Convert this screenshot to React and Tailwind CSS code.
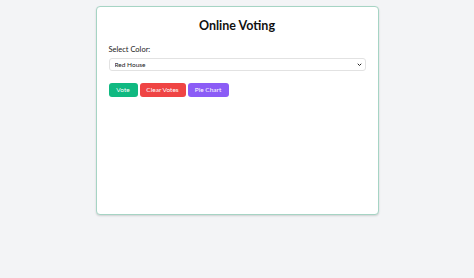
import { useState } from 'react';

const App = () => {
  const [color, setColor] = useState('Red House');

  return (
    <div className="min-h-screen bg-[#f3f4f6] pt-[6px] font-['Lato',sans-serif]">
      <div className="mx-auto w-[283px] h-[209px] bg-white border border-[#a6d4c4] rounded-[4px] shadow-[0_1px_2px_rgba(0,0,0,0.15)] px-[12px] pt-[10px]">
        <h1 className="text-center text-[12.5px] font-bold text-[#111] leading-[18px] mb-[10px]">Online Voting</h1>
        <label className="block text-[7.5px] text-[#222] leading-[10px] mb-[3px]" htmlFor="color">
          Select Color:
        </label>
        <div className="relative">
          <select
            id="color"
            value={color}
            onChange={(e) => setColor(e.target.value)}
            className="block w-full h-[13px] appearance-none text-[6.5px] leading-[10px] text-[#222] border border-[#e2e2e2] rounded-[3px] px-[5px] bg-white"
          >
            <option>Red House</option>
            <option>Blue House</option>
            <option>Green House</option>
            <option>Yellow House</option>
          </select>
          <svg className="absolute right-[4px] top-[4px] w-[5px] h-[5px] pointer-events-none" viewBox="0 0 10 10">
            <path d="M1.5 3.5 L5 7 L8.5 3.5" fill="none" stroke="#222" strokeWidth="2" />
          </svg>
        </div>
        <div className="flex gap-[2px] mt-[12px]">
          <button className="w-[29px] h-[14px] bg-[#10b981] text-white text-[6.5px] rounded-[3px]">Vote</button>
          <button className="w-[46px] h-[14px] bg-[#ef4444] text-white text-[6.5px] rounded-[3px]">Clear Votes</button>
          <button className="w-[41px] h-[14px] bg-[#8b5cf6] text-white text-[6.5px] rounded-[3px]">Pie Chart</button>
        </div>
      </div>
    </div>
  );
};

export default App;
